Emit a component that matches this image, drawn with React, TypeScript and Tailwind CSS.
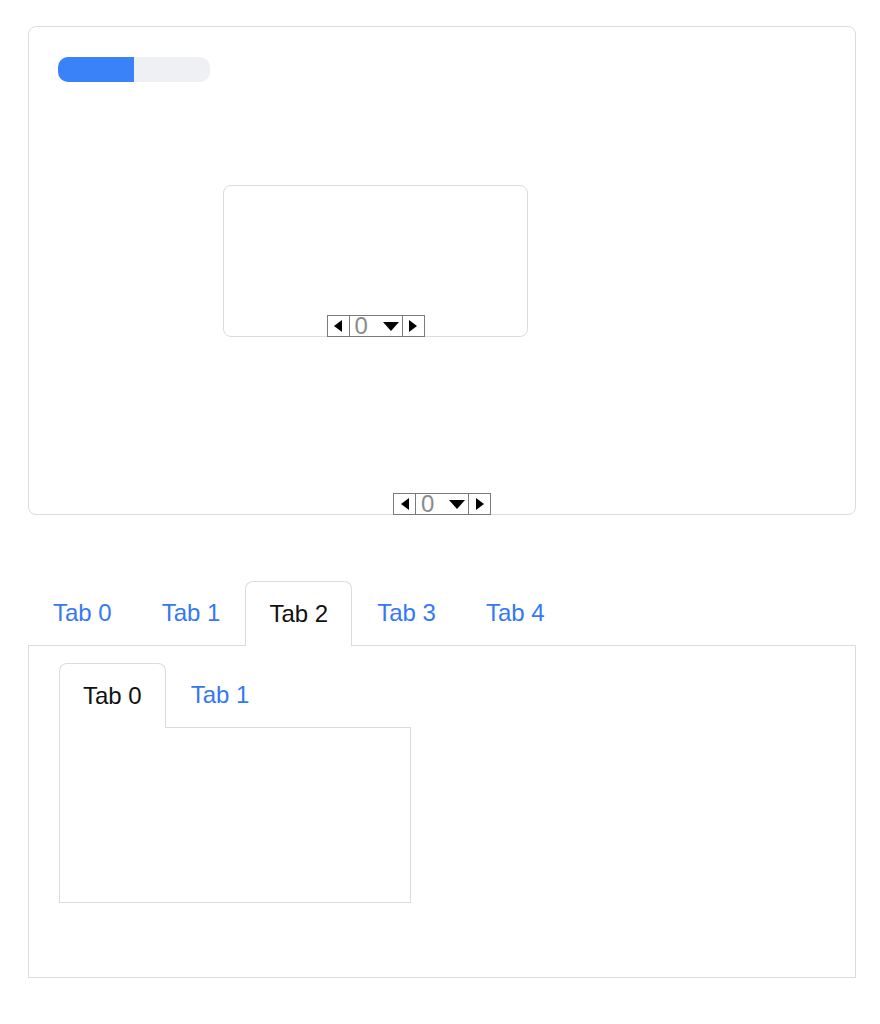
import React from "react";

function Stepper() {
  return (
    <div className="flex h-[22px] border border-[#7a7a7a] bg-white">
      <div className="flex w-[22px] items-center justify-center border-r border-[#7a7a7a]">
        <svg width="8" height="12" viewBox="0 0 8 12">
          <path d="M8 0 L0 6 L8 12 Z" fill="#000" />
        </svg>
      </div>
      <div className="flex w-[53px] items-center justify-between border-r border-[#7a7a7a] pl-[5px] pr-[3px]">
        <span className="text-[24px] leading-none text-[#8a8a8a]">0</span>
        <svg width="16" height="9" viewBox="0 0 16 9">
          <path d="M0 0 L16 0 L8 9 Z" fill="#000" />
        </svg>
      </div>
      <div className="flex w-[21px] items-center justify-center">
        <svg width="8" height="12" viewBox="0 0 8 12">
          <path d="M0 0 L8 6 L0 12 Z" fill="#000" />
        </svg>
      </div>
    </div>
  );
}

function Tab({ label, active }: { label: string; active?: boolean }) {
  return (
    <div
      className={
        active
          ? "relative -mb-px flex h-[65px] items-center rounded-t-lg border border-b-0 border-[#dcdce0] bg-white px-[23px] text-[#111]"
          : "flex h-[64px] items-center px-[25px] text-[#3478f6]"
      }
    >
      {label}
    </div>
  );
}

export default function App() {
  return (
    <div
      className="min-h-screen bg-white pt-[26px] pl-[28px] pr-[24px] text-[24px]"
      style={{ fontFamily: '"Liberation Sans", Arial, sans-serif' }}
    >
      {/* widget container */}
      <div className="relative h-[489px] rounded-lg border border-[#dcdce0] pt-[30px] pl-[29px]">
        <div className="flex h-[25px] w-[152px] overflow-hidden rounded-[10px] bg-[#eff0f4]">
          <div className="w-[76px] bg-[#3a82f7]" />
        </div>
        <div className="relative mt-[103px] ml-[165px] h-[152px] w-[305px] rounded-lg border border-[#dcdce0]">
          <div className="absolute bottom-[-1px] left-1/2 -translate-x-1/2">
            <Stepper />
          </div>
        </div>
        <div className="absolute bottom-[-1px] left-1/2 -translate-x-1/2">
          <Stepper />
        </div>
      </div>

      {/* tabs */}
      <div className="mt-[66px]">
        <div className="flex items-end">
          <Tab label="Tab 0" />
          <Tab label="Tab 1" />
          <Tab label="Tab 2" active />
          <Tab label="Tab 3" />
          <Tab label="Tab 4" />
        </div>
        <div className="h-[333px] border border-[#dcdce0] pt-[17px] pl-[30px]">
          <div className="flex items-end">
            <Tab label="Tab 0" active />
            <Tab label="Tab 1" />
          </div>
          <div className="h-[176px] w-[352px] border border-[#dcdce0]" />
        </div>
      </div>
    </div>
  );
}
